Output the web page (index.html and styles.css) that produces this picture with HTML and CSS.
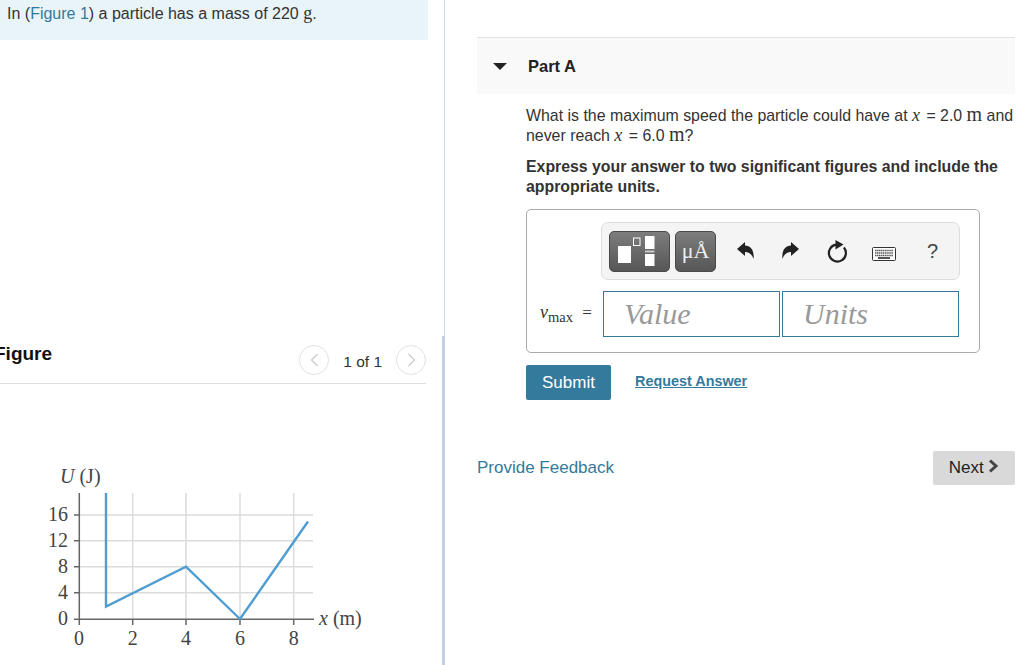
FILE: index.html
```html
<!doctype html>
<html>
 <head>
  <meta charset="utf-8">
  <link rel="stylesheet" href="styles.css">
 </head>
 <body>
  <div class="izquierda">
   <div class="enunciado">In (<a href="#">Figure 1</a>) a particle has a mass of 220 <span class="mate">g</span>.</div>
   <div class="figura-cabecera">
    <h2>Figure</h2>
    <div class="paginador">
     <span class="flecha"><svg width="9" height="14" viewBox="0 0 9 14"><path d="M7.5 1 L1.5 7 L7.5 13" /></svg></span>
     <span class="cuenta">1 of 1</span>
     <span class="flecha"><svg width="9" height="14" viewBox="0 0 9 14"><path d="M1.5 1 L7.5 7 L1.5 13" /></svg></span>
    </div>
   </div>
   <svg class="grafica" width="400" height="205" viewBox="0 460 400 205">
    <g class="rejilla">
     <path d="M132.7 493V619M186 493V619M240 493V619M293.7 493V619" />
     <path d="M79 515H313M79 540.7H313M79 566.7H313M79 592.7H313" />
    </g>
    <g class="ejes">
     <path d="M79.3 493V625M74 619.3H314" />
     <path d="M74 515H79M74 540.7H79M74 566.7H79M74 592.7H79M132.7 619V625M186 619V625M240 619V625M293.7 619V625" />
    </g>
    <path class="curva" d="M106 493V606.5L186 566.7L240 619L308 521.5" />
    <g class="numeros">
     <text x="68" y="521" text-anchor="end">16</text>
     <text x="68" y="546.5" text-anchor="end">12</text>
     <text x="68" y="572.5" text-anchor="end">8</text>
     <text x="68" y="598.5" text-anchor="end">4</text>
     <text x="68" y="625" text-anchor="end">0</text>
     <text x="79" y="645" text-anchor="middle">0</text>
     <text x="132.7" y="645" text-anchor="middle">2</text>
     <text x="186" y="645" text-anchor="middle">4</text>
     <text x="240" y="645" text-anchor="middle">6</text>
     <text x="293.7" y="645" text-anchor="middle">8</text>
     <text x="60" y="483"><tspan font-style="italic">U</tspan> (J)</text>
     <text x="319" y="625"><tspan font-style="italic">x</tspan> (m)</text>
    </g>
   </svg>
  </div>

  <div class="divisor">
   <div class="divisor-arriba"></div>
   <div class="divisor-abajo"></div>
  </div>

  <div class="derecha">
   <div class="parte">
    <span class="triangulo"></span>
    <span class="parte-titulo">Part A</span>
   </div>
   <div class="contenido">
    <p class="pregunta">What is the maximum speed the particle could have at <span class="mate var">x</span> = 2.0 <span class="mate metro">m</span> and never reach <span class="mate var">x</span> = 6.0 <span class="mate metro">m</span>?</p>
    <p class="instruccion">Express your answer to two significant figures and include the appropriate units.</p>
    <div class="respuesta">
     <div class="barra">
      <span class="boton-gris ancho">
       <svg width="44" height="32" viewBox="0 0 44 32">
        <rect x="0" y="11" width="13" height="17" fill="#fff" />
        <rect x="15.5" y="3" width="6.5" height="7.5" fill="none" stroke="#fff" />
        <rect x="27" y="1" width="9.5" height="13" fill="#fff" />
        <rect x="27" y="15.5" width="9.5" height="2" fill="#ccc" />
        <rect x="27" y="19" width="9.5" height="12" fill="#fff" />
       </svg>
      </span>
      <span class="boton-gris estrecho">μÅ</span>
      <svg class="icono deshacer" width="18" height="18" viewBox="0 0 18 18"><path d="M1 7 L9 0 V3.5 C14.5 3.5 18.5 8 17.5 17 C15.8 12 13 10 9 10 V14 Z" /></svg>
      <svg class="icono rehacer" width="18" height="18" viewBox="0 0 18 18"><path d="M17 7 L9 0 V3.5 C3.5 3.5 -.5 8 .5 17 C2.2 12 5 10 9 10 V14 Z" /></svg>
      <svg class="icono reiniciar" width="24" height="24" viewBox="0 0 24 24"><path class="aro" d="M18.9 8.5 A8.5 8.5 0 1 1 11 5.6" /><path d="M10.5 1 L18.5 5.5 L10.5 10.5 Z" /></svg>
      <svg class="icono teclado" width="24" height="14" viewBox="0 0 24 14">
       <rect x="0.5" y="0.5" width="23" height="13" rx="1" fill="#fff" stroke="#333" />
       <path class="teclas" d="M3 3.5H21M3 6H21M3 8.5H21" />
       <path d="M6 10H18V12H6Z" fill="#555" />
      </svg>
      <span class="ayuda">?</span>
     </div>
     <div class="fila-entrada">
      <span class="etiqueta"><i>v</i><sub>max</sub> =</span>
      <input class="campo" type="text" placeholder="Value">
      <input class="campo" type="text" placeholder="Units">
     </div>
    </div>
    <div class="acciones">
     <button class="enviar">Submit</button>
     <a class="pedir" href="#">Request Answer</a>
    </div>
   </div>
   <div class="pie">
    <a href="#">Provide Feedback</a>
    <button class="siguiente">Next <svg width="11" height="14" viewBox="0 0 11 14"><path d="M2 1.5 L8 7 L2 12.5" /></svg></button>
   </div>
  </div>
 </body>
</html>
```

FILE: styles.css
```css
html, body {
    height: 100%;
}
body {
    display: flex;
    margin: 0;
    height: 665px;
    overflow: hidden;
    background-color: #fff;
    color: #333;
    font-family: "Liberation Sans", Arial, sans-serif;
    font-size: 16px;
}
a {
    color: #337a9c;
    text-decoration: none;
}
.mate {
    font-family: "Liberation Serif", "DejaVu Serif", serif;
    font-size: 18px;
    line-height: 0;
}
.var {
    font-style: italic;
    margin-right: 2px;
}
.metro {
    font-size: 20px;
    font-weight: normal;
}

/* Columna izquierda */
.izquierda {
    width: 428px;
    flex-shrink: 0;
    overflow: hidden;
}
.enunciado {
    height: 40px;
    padding: 5px 0 0 7px;
    box-sizing: border-box;
    line-height: 18px;
    background-color: #e8f4f7;
}
.figura-cabecera {
    display: flex;
    justify-content: space-between;
    align-items: center;
    height: 44px;
    margin-top: 299px;
    border-bottom: 1px solid #ddd;
    margin-right: 2px;
}
.figura-cabecera h2 {
    margin: 0 0 14px -6px;
    font-size: 19px;
    color: #111;
}
.paginador {
    display: flex;
    align-items: center;
    margin-bottom: 2px;
}
.flecha {
    display: flex;
    align-items: center;
    justify-content: center;
    width: 30px;
    height: 30px;
    border: 1px solid #e2e2e2;
    border-radius: 50%;
    box-sizing: border-box;
}
.flecha svg {
    fill: none;
    stroke: #ccc;
    stroke-width: 1.3;
}
.cuenta {
    margin: 4px 14px 0;
    font-size: 15.5px;
}
.grafica {
    display: block;
    margin-top: 76px;
}
.rejilla path {
    fill: none;
    stroke: #dcdcdc;
    stroke-width: 1.5;
}
.ejes path {
    fill: none;
    stroke: #666;
    stroke-width: 1.5;
}
.curva {
    fill: none;
    stroke: #4f9dd1;
    stroke-width: 2.4;
}
.numeros text {
    font-family: "Liberation Serif", serif;
    font-size: 20px;
    fill: #444;
}

/* Linea entre columnas */
.divisor {
    display: flex;
    flex-direction: column;
    align-items: flex-end;
    width: 3px;
    margin-left: 14px;
    flex-shrink: 0;
}
.divisor-arriba {
    width: 1.5px;
    height: 336px;
    background-color: #cfdbe9;
}
.divisor-abajo {
    width: 3px;
    flex-grow: 1;
    background-color: #c3d0e3;
}

/* Columna derecha */
.derecha {
    width: 538px;
    padding-left: 32px;
    flex-shrink: 0;
}
.parte {
    display: flex;
    align-items: center;
    height: 56px;
    margin-top: 37px;
    border-top: 1px solid #e2e2e2;
    background-color: #f9f9f9;
}
.triangulo {
    width: 0;
    height: 0;
    margin-left: 16px;
    border-left: 7px solid transparent;
    border-right: 7px solid transparent;
    border-top: 7px solid #222;
}
.parte-titulo {
    margin-left: 21px;
    font-weight: bold;
    font-size: 16.5px;
    color: #222;
}
.contenido {
    padding-left: 49px;
}
.pregunta, .instruccion {
    line-height: 20px;
    margin: 0;
}
.pregunta {
    margin-top: 12px;
    font-size: 15.9px;
}
.instruccion {
    margin-top: 11px;
    font-weight: bold;
    font-size: 15.85px;
}
.respuesta {
    width: 454px;
    height: 144px;
    margin-top: 12px;
    padding-top: 12px;
    border: 1px solid #aaa;
    border-radius: 5px;
    box-sizing: border-box;
}
.barra {
    display: flex;
    align-items: center;
    width: 359px;
    height: 58px;
    margin-left: 74px;
    padding-left: 7px;
    border: 1px solid #ddd;
    border-radius: 7px;
    background-color: #f4f4f4;
    box-sizing: border-box;
}
.boton-gris {
    display: flex;
    align-items: center;
    justify-content: center;
    height: 41px;
    border: 1px solid #4a4a4a;
    border-radius: 5px;
    box-sizing: border-box;
    background: linear-gradient(#7d7d7d, #565656);
    color: #eee;
    font-family: "Liberation Serif", serif;
    font-size: 22px;
}
.ancho {
    width: 61px;
}
.estrecho {
    width: 41px;
    margin-left: 5px;
}
.icono {
    fill: #222;
}
.deshacer {
    margin-left: 20px;
}
.rehacer {
    margin-left: 28px;
}
.reiniciar {
    margin-left: 25px;
}
.teclado {
    margin: 5px 0 0 23px;
}
.aro {
    fill: none;
    stroke: #222;
    stroke-width: 2.2;
}
.teclas {
    fill: none;
    stroke: #555;
    stroke-width: 1.3;
    stroke-dasharray: 1.4 .5;
}
.ayuda {
    margin-left: 31px;
    font-size: 20px;
    color: #444;
}
.fila-entrada {
    display: flex;
    align-items: center;
    margin-top: 11px;
}
.etiqueta {
    width: 76px;
    padding-left: 13px;
    box-sizing: border-box;
    font-family: "Liberation Serif", serif;
    font-size: 17px;
    color: #333;
}
.etiqueta i {
    font-size: 18px;
}
.etiqueta sub {
    font-size: 14.5px;
    margin-right: 5px;
}
.campo {
    width: 177px;
    height: 46px;
    margin-right: 2px;
    padding: 0 20px;
    border: 1px solid #337a9c;
    border-radius: 0;
    outline: none;
    box-sizing: border-box;
    font-family: "Liberation Serif", serif;
    font-style: italic;
    font-size: 30px;
}
.campo::placeholder {
    color: #999;
    opacity: 1;
}
.acciones {
    display: flex;
    align-items: center;
    margin-top: 12px;
}
.enviar {
    width: 85px;
    height: 35px;
    border: 0;
    border-radius: 2px;
    background-color: #337a9c;
    color: #fff;
    font-family: "Liberation Sans", Arial, sans-serif;
    font-size: 17px;
}
.pedir {
    margin: 0 0 3px 24px;
    font-size: 14.4px;
    font-weight: bold;
    text-decoration: underline;
}
.pie {
    display: flex;
    justify-content: space-between;
    align-items: center;
    margin-top: 51px;
    font-size: 17px;
}
.siguiente {
    width: 82px;
    height: 34px;
    border: 0;
    border-radius: 2px;
    background-color: #d9d9d9;
    color: #222;
    font-family: "Liberation Sans", Arial, sans-serif;
    font-size: 17px;
    white-space: nowrap;
}
.siguiente svg {
    fill: none;
    stroke: #444;
    stroke-width: 3;
}
```
